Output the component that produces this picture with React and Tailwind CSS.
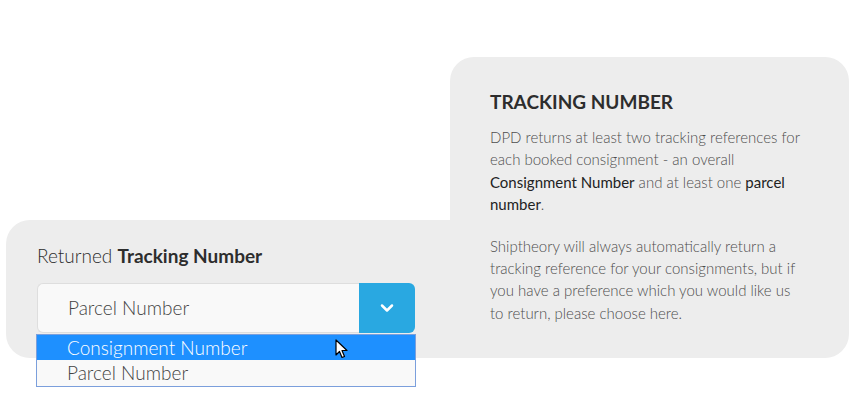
export default function App() {
  const font = { fontFamily: "Lato, 'Liberation Sans', sans-serif" };
  return (
    <div className="relative w-[866px] h-[403px] bg-white overflow-hidden" style={font}>
      <div className="flex items-end pt-[57px] pl-[6px]">
        {/* left card with the select */}
        <div className="relative w-[444px] h-[138px] bg-[#ededed] rounded-l-[24px] pl-[31px] pt-[24px]">
          <p className="text-[19px] leading-[24px] font-light text-[#2d2d2d]">
            Returned <span className="font-bold">Tracking Number</span>
          </p>
          <div className="relative mt-[15px] w-[378px]">
            <div className="flex h-[50px]">
              <div className="flex-1 flex items-center pl-[30px] bg-[#f9f9f9] border border-[#dedede] border-r-0 rounded-l-[6px] text-[19px] font-light text-[#444]">
                Parcel Number
              </div>
              <div className="w-[56px] flex items-center justify-center bg-[#29a8e1] rounded-r-[6px]">
                <svg width="14" height="10" viewBox="0 0 14 10">
                  <path d="M2 2.5 L7 7.5 L12 2.5" fill="none" stroke="white" strokeWidth="2.5" strokeLinecap="round" strokeLinejoin="round" />
                </svg>
              </div>
            </div>
            <div className="absolute left-[-1px] top-[51px] w-[380px] border border-[#7b9fdc] bg-[#f9f9f9] z-10">
              <div className="h-[25px] bg-[#1e90ff] text-white text-[19px] leading-[25px] font-light pl-[30px]">
                Consignment Number
              </div>
              <div className="h-[26px] text-[#444] text-[19px] leading-[26px] font-light pl-[30px]">
                Parcel Number
              </div>
              <svg className="absolute left-[298px] top-[4px]" width="14" height="21" viewBox="0 0 14 21">
                <path d="M1 1 L1 16 L4.5 12.5 L7 18.5 L9.5 17.5 L7 11.5 L12 11.5 Z" fill="white" stroke="black" strokeWidth="1.2" strokeLinejoin="round" />
              </svg>
            </div>
          </div>
        </div>
        {/* right info card */}
        <div className="w-[399px] h-[301px] bg-[#ededed] rounded-t-[24px] rounded-br-[24px] pl-[40px] pr-[42px] pt-[34px]">
          <h2 className="text-[19px] leading-[22px] font-bold text-[#2d2d2d]">TRACKING NUMBER</h2>
          <p className="mt-[13px] text-[15px] leading-[22.4px] font-light text-[#4d4d4d]">
            DPD returns at least two tracking references for each booked consignment - an overall{" "}
            <span className="font-normal text-[#222]">Consignment Number</span> and at least one{" "}
            <span className="font-normal text-[#222]">parcel number</span>.
          </p>
          <p className="mt-[19px] text-[15px] leading-[22.4px] font-light text-[#4d4d4d]">
            Shiptheory will always automatically return a tracking reference for your consignments, but if you have a preference which you would like us to return, please choose here.
          </p>
        </div>
      </div>
    </div>
  );
}
